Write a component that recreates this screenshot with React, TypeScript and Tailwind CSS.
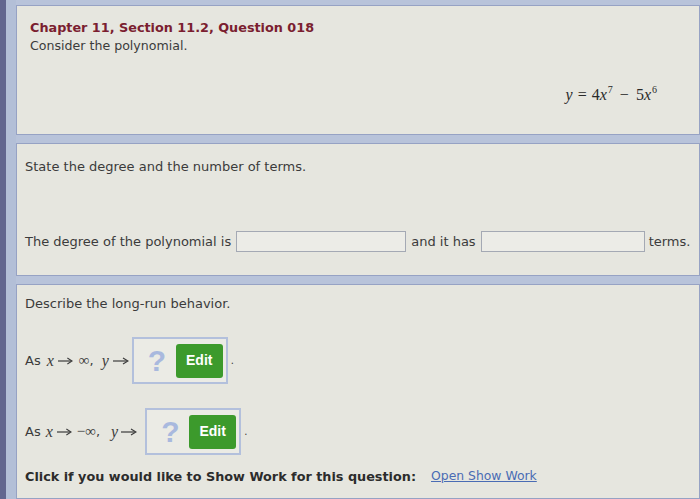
import React from "react";

const sans = { fontFamily: '"DejaVu Sans", Verdana, sans-serif' };
const serif = { fontFamily: '"Liberation Serif", "Times New Roman", serif' };

function AnswerBox() {
  return (
    <div className="flex h-[47px] w-[96px] items-center border-2 border-[#b3c0dc] bg-[#ebebe5] pl-[14px]">
      <span className="w-[16px] text-[30px] font-bold leading-none text-[#a9b9de]" style={{ fontFamily: '"Liberation Sans", Arial, sans-serif' }}>?</span>
      <button className="ml-[12px] flex h-[34px] w-[47px] items-center justify-center rounded-[3px] bg-[#3c9a2c] text-[14px] font-bold text-white" style={{ fontFamily: '"Liberation Sans", Arial, sans-serif' }}>
        Edit
      </button>
    </div>
  );
}

function Arrow({ w }: { w: string }) {
  return (
    <svg className={`${w} h-[10px] shrink-0`} viewBox="0 0 16 10" preserveAspectRatio="none">
      <path d="M0 5 H14" stroke="#3b3b3b" strokeWidth="1.2" />
      <path d="M10 2 L15 5 L10 8" fill="none" stroke="#3b3b3b" strokeWidth="1.2" />
    </svg>
  );
}

export default function App() {
  return (
    <div className="flex h-[499px] w-[700px] overflow-hidden bg-[#b8c3da]" style={sans}>
      <div className="w-[6px] shrink-0 bg-[#62668f]" />
      <div className="w-[10px] shrink-0 bg-[#b3bfd7]" />
      <div className="flex flex-1 flex-col gap-[8px] pt-[5px]">
        {/* Panel 1 */}
        <div className="flex h-[130px] flex-col border border-[#96a2c4] bg-[#e6e6df] pl-[13px] pt-[13px]">
          <div className="text-[12.8px] font-bold leading-[18px] text-[#7b1e30]">Chapter 11, Section 11.2, Question 018</div>
          <div className="text-[12.6px] leading-[18px] text-[#3b3b3b]">Consider the polynomial.</div>
          <div className="mt-[30px] pr-[42px] text-right text-[16px] leading-[20px] text-[#2a2a2a]" style={serif}>
            <span className="italic">y</span>
            <span className="mx-[5px]">=</span>4<span className="italic">x</span>
            <sup className="top-[-7px] ml-[1px] text-[10px]">7</sup>
            <span className="mx-[7px]">−</span>5<span className="italic">x</span>
            <sup className="top-[-7px] ml-[1px] text-[10px]">6</sup>
          </div>
        </div>

        {/* Panel 2 */}
        <div className="flex h-[133px] flex-col border border-[#96a2c4] bg-[#e6e6df] pl-[8px] pt-[14px] text-[13px] text-[#3b3b3b]">
          <div className="leading-[18px]">State the degree and the number of terms.</div>
          <div className="mt-[55px] flex items-center">
            <span>The degree of the polynomial is</span>
            <div className="ml-[5px] h-[21px] w-[170px] border border-[#a4a9b4] bg-[#ecece7]" />
            <span className="ml-[5px]">and it has</span>
            <div className="ml-[5px] h-[21px] w-[164px] border border-[#a4a9b4] bg-[#ecece7]" />
            <span className="ml-[4px]">terms.</span>
          </div>
        </div>

        {/* Panel 3 */}
        <div className="flex flex-1 flex-col border border-[#96a2c4] bg-[#e6e6df] pl-[8px] pt-[10px] text-[13px] text-[#3b3b3b]">
          <div className="leading-[18px]">Describe the long-run behavior.</div>
          <div className="mt-[24px] flex items-center">
            <span>As</span>
            <span className="ml-[6px] text-[16px] italic" style={serif}>x</span>
            <span className="ml-[4px]"><Arrow w="w-[15px]" /></span>
            <span className="ml-[6px] text-[15px]" style={serif}>∞</span>
            <span>,</span>
            <span className="ml-[8px] text-[16px] italic" style={serif}>y</span>
            <span className="ml-[4px]"><Arrow w="w-[16px]" /></span>
            <span className="ml-[3px]"><AnswerBox /></span>
            <span className="ml-[3px] text-[10px]">.</span>
          </div>
          <div className="mt-[24px] flex items-center">
            <span>As</span>
            <span className="ml-[5px] text-[16px] italic" style={serif}>x</span>
            <span className="ml-[4px]"><Arrow w="w-[15px]" /></span>
            <span className="ml-[5px] text-[15px]" style={serif}>−∞</span>
            <span>,</span>
            <span className="ml-[11px] text-[16px] italic" style={serif}>y</span>
            <span className="ml-[3px]"><Arrow w="w-[16px]" /></span>
            <span className="ml-[8px]"><AnswerBox /></span>
            <span className="ml-[3px] text-[10px]">.</span>
          </div>
          <div className="mt-[12px] flex items-center">
            <span className="text-[12.8px] font-bold text-[#2c2c2c]">Click if you would like to Show Work for this question:</span>
            <span className="ml-[15px] text-[12.4px] text-[#4a6cb4] underline">Open Show Work</span>
          </div>
        </div>
      </div>
    </div>
  );
}
